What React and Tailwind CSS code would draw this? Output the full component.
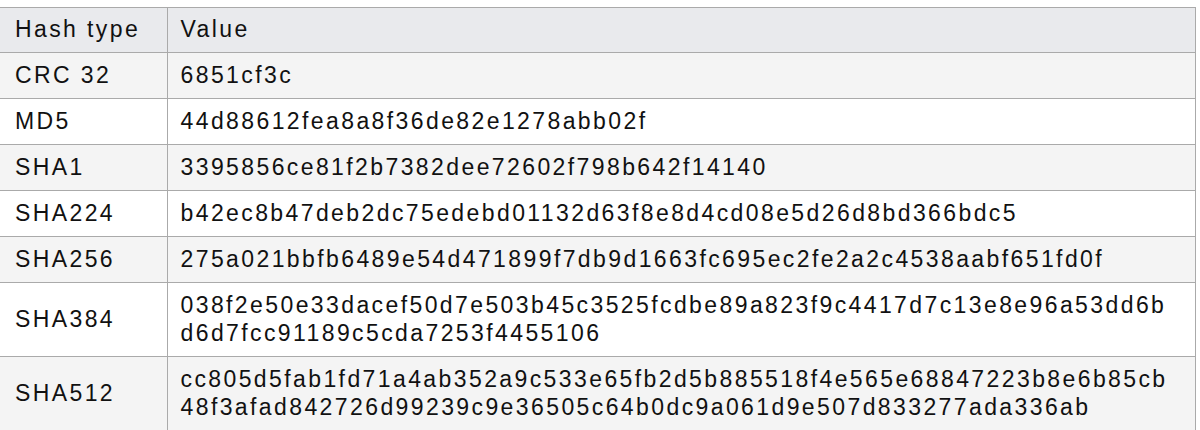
const rows = [
  { type: "CRC 32", lines: ["6851cf3c"] },
  { type: "MD5", lines: ["44d88612fea8a8f36de82e1278abb02f"] },
  { type: "SHA1", lines: ["3395856ce81f2b7382dee72602f798b642f14140"] },
  {
    type: "SHA224",
    lines: ["b42ec8b47deb2dc75edebd01132d63f8e8d4cd08e5d26d8bd366bdc5"],
  },
  {
    type: "SHA256",
    lines: ["275a021bbfb6489e54d471899f7db9d1663fc695ec2fe2a2c4538aabf651fd0f"],
  },
  {
    type: "SHA384",
    lines: [
      "038f2e50e33dacef50d7e503b45c3525fcdbe89a823f9c4417d7c13e8e96a53dd6b",
      "d6d7fcc91189c5cda7253f4455106",
    ],
  },
  {
    type: "SHA512",
    lines: [
      "cc805d5fab1fd71a4ab352a9c533e65fb2d5b885518f4e565e68847223b8e6b85cb",
      "48f3afad842726d99239c9e36505c64b0dc9a061d9e507d833277ada336ab",
    ],
  },
];

export default function App() {
  return (
    <div className="w-[1200px] h-[430px] bg-white pt-[7px] font-['Liberation_Sans',Arial,sans-serif] text-[23px] leading-[28px] tracking-[2.4px] text-[#111111]">
      <table className="w-[1196px] border-collapse">
        <thead>
          <tr className="bg-[#e9eaed]">
            <th className="w-[167px] border border-l-0 border-[#aaaaaa] pl-[15px] pt-[7px] pb-[9px] text-left font-normal">
              Hash type
            </th>
            <th className="border border-[#aaaaaa] pl-[13px] pt-[7px] pb-[9px] text-left font-normal">
              Value
            </th>
          </tr>
        </thead>
        <tbody>
          {rows.map((row, i) => (
            <tr key={row.type} className={i % 2 === 0 ? "bg-[#f4f4f4]" : "bg-white"}>
              <td className="border border-l-0 border-[#aaaaaa] pl-[15px] pt-[8px] pb-[9px]">
                {row.type}
              </td>
              <td className="border border-[#aaaaaa] pl-[13px] pt-[8px] pb-[9px] whitespace-nowrap">
                {row.lines.map((line) => (
                  <div key={line}>{line}</div>
                ))}
              </td>
            </tr>
          ))}
        </tbody>
      </table>
    </div>
  );
}
